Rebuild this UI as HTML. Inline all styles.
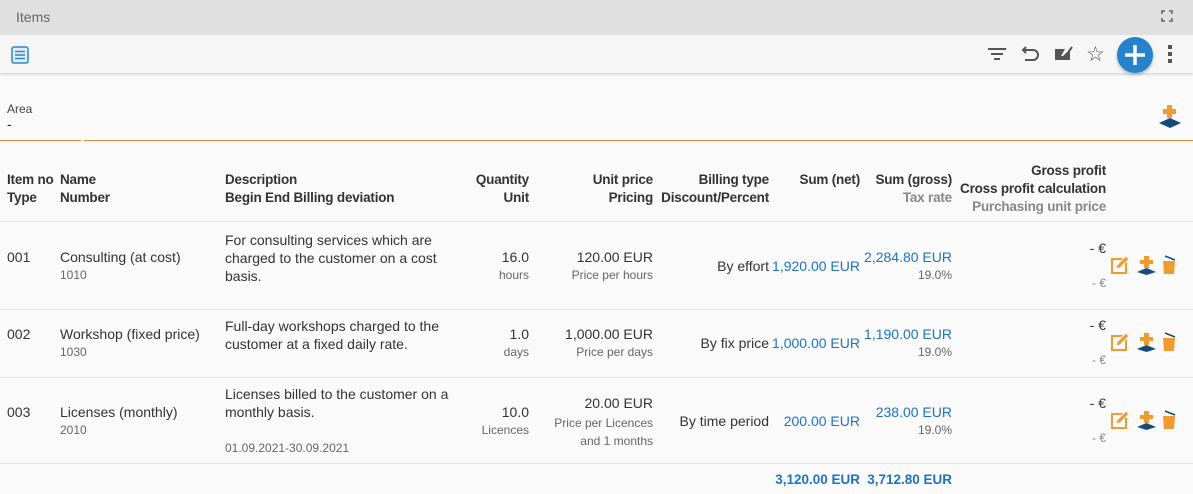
<!DOCTYPE html>
<html><head><style>
body{margin:0;width:1193px;height:494px;overflow:hidden;background:#fafafa;font-family:"Liberation Sans",sans-serif;color:#333;font-size:14px;position:relative}
.a{position:absolute;white-space:nowrap}
.r{text-align:right}
.b{font-weight:bold;color:#333;font-size:13.5px;letter-spacing:-0.2px}
.s{font-size:12px;color:#666}
.bl{color:#1a73c8}
.line{position:absolute;left:0;width:1193px;height:1px;background:#e4e4e4}
</style></head><body>
<div class="a" style="left:0;top:0;width:1193px;height:35px;background:#e0e0e0"></div>
<div class="a" style="left:16px;top:9px;font-size:14px;color:#666">Items</div>
<svg class="a" style="left:1161px;top:10px" width="12" height="12" viewBox="0 0 12 12" fill="none" stroke="#666" stroke-width="1.6"><path d="M1 4V1h3M8 1h3v3M11 8v3H8M4 11H1V8"/></svg>
<div class="a" style="left:0;top:35px;width:1193px;height:38px;background:#f6f6f6;box-shadow:0 2px 2px rgba(0,0,0,.12)"></div>
<svg class="a" style="left:11px;top:46px" width="18" height="18" viewBox="0 0 18 18"><rect x="1" y="1" width="16" height="16" rx="2" fill="#e3f0fb" stroke="#2a86d1" stroke-width="1.5"/><path d="M4 5.5h10M4 9h10M4 12.5h10" stroke="#2a86d1" stroke-width="1.5"/></svg>
<svg class="a" style="left:987px;top:46px" width="20" height="16" viewBox="0 0 20 16" stroke="#555" stroke-width="2"><path d="M1 3h18M4 8h12M7 13h6"/></svg>
<svg class="a" style="left:1021px;top:45px" width="20" height="18" viewBox="0 0 20 18" fill="none" stroke="#555" stroke-width="2"><path d="M5 2L2 5l3 3M2 5h10a5 5 0 010 10H4"/></svg>
<svg class="a" style="left:1054px;top:45px" width="20" height="16" viewBox="0 0 20 16"><path d="M1 4h10l-4 7h2l7-7v11H1z" fill="#555"/><path d="M11 12l7-10" stroke="#555" stroke-width="2"/></svg>
<div class="a" style="left:1086px;top:42px;font-size:21px;color:#555">☆</div>
<div class="a" style="left:1117px;top:37px;width:36px;height:36px;border-radius:50%;background:#2582cc;box-shadow:0 2px 3px rgba(0,0,0,.25)"></div>
<svg class="a" style="left:1123px;top:43px" width="24" height="24" viewBox="0 0 24 24" stroke="#fff" stroke-width="3.5"><path d="M12 2v20M2 12h20"/></svg>
<svg class="a" style="left:1166px;top:45px" width="8" height="18" viewBox="0 0 8 18" fill="#555"><rect x="2" y="0" width="4" height="4"/><rect x="2" y="7" width="4" height="4"/><rect x="2" y="14" width="4" height="4"/></svg>
<div class="a" style="left:7px;top:102px;font-size:12px;color:#444">Area</div>
<div class="a" style="left:7px;top:116px;font-size:14px;color:#222">-</div>
<div class="a" style="left:0;top:140px;width:81px;height:1px;background:#d48a3c"></div>
<div class="a" style="left:84px;top:140px;width:1109px;height:1px;background:#d48a3c"></div>
<svg class="a" style="left:1158px;top:104px" width="24" height="24" viewBox="0 0 24 24"><path d="M9 1h5v4h4v5h-4v4H9v-4H5V5h4z" fill="#f29a2e"/><path d="M1 19l11-5 11 5-11 5z" fill="#164a7e"/></svg>
<div class="line" style="top:221px"></div><div class="line" style="top:309px"></div><div class="line" style="top:377px"></div><div class="line" style="top:463px"></div>
<div class="a b" style="left:7px;top:171px;line-height:18px">Item no<br>Type</div>
<div class="a b" style="left:60px;top:171px;line-height:18px">Name<br>Number</div>
<div class="a b" style="left:225px;top:171px;line-height:18px">Description<br>Begin End Billing deviation</div>
<div class="a b r" style="right:664px;top:171px;line-height:18px">Quantity<br>Unit</div>
<div class="a b r" style="right:540px;top:171px;line-height:18px">Unit price<br>Pricing</div>
<div class="a b r" style="right:424px;top:171px;line-height:18px">Billing type<br>Discount/Percent</div>
<div class="a b r" style="right:333px;top:171px;line-height:18px">Sum (net)</div>
<div class="a b r" style="right:241px;top:171px;line-height:18px">Sum (gross)<br><span style="color:#888">Tax rate</span></div>
<div class="a b r" style="right:87px;top:162px;line-height:18px">Gross profit<br>Cross profit calculation<br><span style="color:#888">Purchasing unit price</span></div>

<div class="a" style="left:7px;top:249px">001</div>
<div class="a" style="left:60px;top:249px">Consulting (at cost)</div>
<div class="a s" style="left:60px;top:268px">1010</div>
<div class="a" style="left:225px;top:231px;line-height:18px">For consulting services which are<br>charged to the customer on a cost<br>basis.</div>
<div class="a r" style="right:664px;top:249px">16.0</div><div class="a s r" style="right:664px;top:268px">hours</div>
<div class="a r" style="right:540px;top:249px">120.00 EUR</div><div class="a s r" style="right:540px;top:268px">Price per hours</div>
<div class="a r" style="right:424px;top:258px">By effort</div>
<div class="a r bl" style="right:333px;top:258px">1,920.00 EUR</div>
<div class="a r bl" style="right:241px;top:249px">2,284.80 EUR</div><div class="a s r" style="right:241px;top:268px">19.0%</div>
<div class="a r" style="right:87px;top:240px">- €</div><div class="a s r" style="right:87px;top:276px;color:#888">- €</div>

<div class="a" style="left:7px;top:326px">002</div>
<div class="a" style="left:60px;top:326px">Workshop (fixed price)</div>
<div class="a s" style="left:60px;top:345px">1030</div>
<div class="a" style="left:225px;top:317px;line-height:18px">Full-day workshops charged to the<br>customer at a fixed daily rate.</div>
<div class="a r" style="right:664px;top:326px">1.0</div><div class="a s r" style="right:664px;top:345px">days</div>
<div class="a r" style="right:540px;top:326px">1,000.00 EUR</div><div class="a s r" style="right:540px;top:345px">Price per days</div>
<div class="a r" style="right:424px;top:335px">By fix price</div>
<div class="a r bl" style="right:333px;top:335px">1,000.00 EUR</div>
<div class="a r bl" style="right:241px;top:326px">1,190.00 EUR</div><div class="a s r" style="right:241px;top:345px">19.0%</div>
<div class="a r" style="right:87px;top:317px">- €</div><div class="a s r" style="right:87px;top:353px;color:#888">- €</div>

<div class="a" style="left:7px;top:404px">003</div>
<div class="a" style="left:60px;top:404px">Licenses (monthly)</div>
<div class="a s" style="left:60px;top:423px">2010</div>
<div class="a" style="left:225px;top:385px;line-height:18px">Licenses billed to the customer on a<br>monthly basis.</div>
<div class="a s" style="left:225px;top:441px">01.09.2021-30.09.2021</div>
<div class="a r" style="right:664px;top:404px">10.0</div><div class="a s r" style="right:664px;top:423px">Licences</div>
<div class="a r" style="right:540px;top:395px">20.00 EUR</div><div class="a s r" style="right:540px;top:414px;line-height:18px">Price per Licences<br>and 1 months</div>
<div class="a r" style="right:424px;top:413px">By time period</div>
<div class="a r bl" style="right:333px;top:413px">200.00 EUR</div>
<div class="a r bl" style="right:241px;top:404px">238.00 EUR</div><div class="a s r" style="right:241px;top:423px">19.0%</div>
<div class="a r" style="right:87px;top:395px">- €</div><div class="a s r" style="right:87px;top:431px;color:#888">- €</div>

<div class="a r bl" style="right:333px;top:472px;font-weight:bold;font-size:13.5px">3,120.00 EUR</div>
<div class="a r bl" style="right:241px;top:472px;font-weight:bold;font-size:13.5px">3,712.80 EUR</div>

<svg width="0" height="0" style="position:absolute"><defs>
<g id="ic">
<rect x="1" y="5" width="14" height="14" fill="none" stroke="#f29a2e" stroke-width="2"/>
<path d="M5 15l1-4 9-9 3 3-9 9z" fill="#f29a2e" stroke="#fafafa" stroke-width="1"/>
<path d="M33 2h5v4h4v4h-4v4h-5v-4h-4V6h4z" fill="#f29a2e"/>
<path d="M26 18l9.5-4 9.5 4-9.5 3z" fill="#164a7e"/>
<path d="M52 7h12l-1 13H53z" fill="#f29a2e"/>
<path d="M54 2l10 4" stroke="#164a7e" stroke-width="1.5"/>
</g></defs></svg>
<svg class="a" style="left:1111px;top:254px" width="70" height="22"><use href="#ic"/></svg>
<svg class="a" style="left:1111px;top:331px" width="70" height="22"><use href="#ic"/></svg>
<svg class="a" style="left:1111px;top:409px" width="70" height="22"><use href="#ic"/></svg>
</body></html>
